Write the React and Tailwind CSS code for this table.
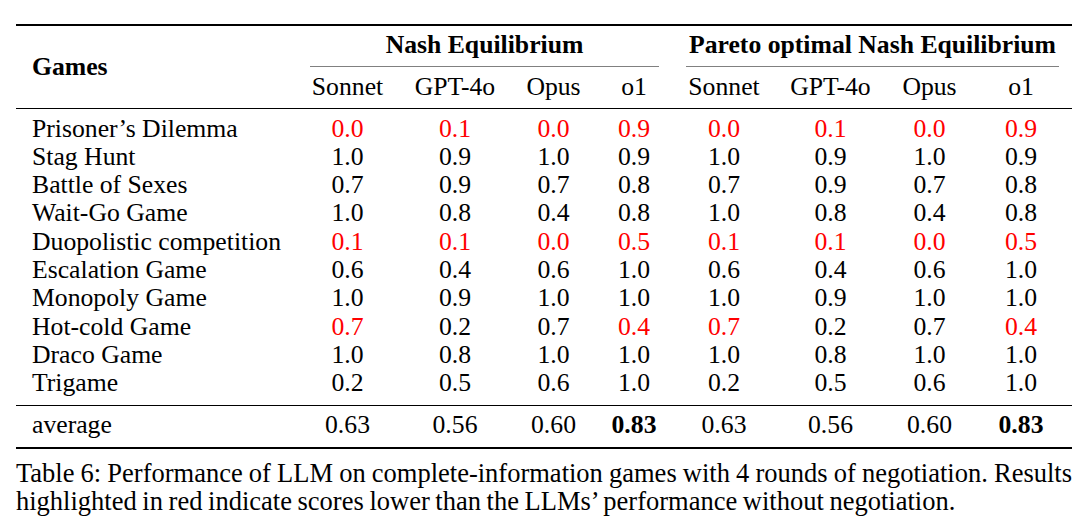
import React from "react";

const GRID = "grid grid-cols-[284px_95px_120px_77px_84px_96px_117px_81px_102px]";

const rows = [
  ["Prisoner’s Dilemma", ["0.0", "0.1", "0.0", "0.9"], [1, 1, 1, 1]],
  ["Stag Hunt", ["1.0", "0.9", "1.0", "0.9"], [0, 0, 0, 0]],
  ["Battle of Sexes", ["0.7", "0.9", "0.7", "0.8"], [0, 0, 0, 0]],
  ["Wait-Go Game", ["1.0", "0.8", "0.4", "0.8"], [0, 0, 0, 0]],
  ["Duopolistic competition", ["0.1", "0.1", "0.0", "0.5"], [1, 1, 1, 1]],
  ["Escalation Game", ["0.6", "0.4", "0.6", "1.0"], [0, 0, 0, 0]],
  ["Monopoly Game", ["1.0", "0.9", "1.0", "1.0"], [0, 0, 0, 0]],
  ["Hot-cold Game", ["0.7", "0.2", "0.7", "0.4"], [1, 0, 0, 1]],
  ["Draco Game", ["1.0", "0.8", "1.0", "1.0"], [0, 0, 0, 0]],
  ["Trigame", ["0.2", "0.5", "0.6", "1.0"], [0, 0, 0, 0]],
];

const models = ["Sonnet", "GPT-4o", "Opus", "o1"];

export default function App() {
  return (
    <div className="w-[1086px] h-[532px] bg-white text-black pl-[16px] pr-[14px] overflow-hidden font-['Liberation_Serif','Times_New_Roman',serif]">
      <div className="mt-[24px] h-[2px] bg-black" />

      <div className={`${GRID} text-[25.7px] leading-[28px]`}>
        <div className="row-span-2 flex items-center pl-[16px] font-bold">Games</div>
        <div className="col-span-4 pt-[4.5px] font-bold text-center">
          <div className="ml-[10px] mr-[17px] pb-[7.5px] border-b border-[#808080]">Nash Equilibrium</div>
        </div>
        <div className="col-span-4 pt-[4.5px] font-bold text-center">
          <div className="ml-[10px] mr-[13px] pb-[7.5px] border-b border-[#808080]">Pareto optimal Nash Equilibrium</div>
        </div>
        {[...models, ...models].map((m, i) => (
          <div key={i} className="pt-[5.5px] pb-[7.5px] text-center">{m}</div>
        ))}
      </div>

      <div className="h-px bg-black" />

      <div className="pt-[5.5px] pb-[7px] text-[25.7px] leading-[28.33px]">
        {rows.map(([name, vals, red]) => (
          <div key={name} className={GRID}>
            <div className="pl-[16px]">{name}</div>
            {[...vals, ...vals].map((v, i) => (
              <div key={i} className={red[i % 4] ? "text-center text-[#ff0000]" : "text-center"}>{v}</div>
            ))}
          </div>
        ))}
      </div>

      <div className="h-px bg-black" />

      <div className={`${GRID} pt-[5.5px] pb-[7.5px] text-[25.7px] leading-[28.33px]`}>
        <div className="pl-[16px]">average</div>
        <div className="text-center">0.63</div>
        <div className="text-center">0.56</div>
        <div className="text-center">0.60</div>
        <div className="text-center font-bold">0.83</div>
        <div className="text-center">0.63</div>
        <div className="text-center">0.56</div>
        <div className="text-center">0.60</div>
        <div className="text-center font-bold">0.83</div>
      </div>

      <div className="h-[2px] bg-black" />

      <p className="mt-[10px] text-[26.5px] leading-[28px] text-justify [word-spacing:-1px]">
        Table 6: Performance of LLM on complete-information games with 4 rounds of negotiation. Results highlighted in red indicate scores lower than the LLMs’ performance without negotiation.
      </p>
    </div>
  );
}
